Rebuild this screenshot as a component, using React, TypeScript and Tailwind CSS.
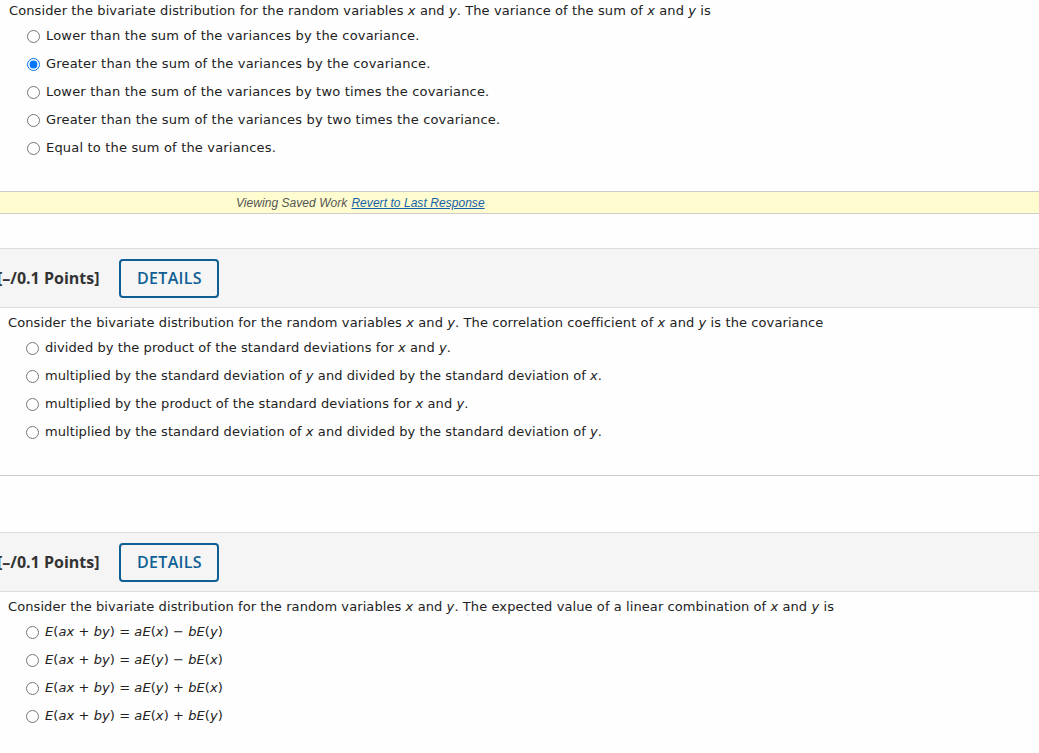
import React from "react";

const v = "font-['DejaVu_Sans',Verdana,sans-serif]";

function I({ children }: { children: React.ReactNode }) {
    return <span className="italic">{children}</span>;
}

function Option({ children, checked = false, name }: { children: React.ReactNode; checked?: boolean; name: string }) {
    return (
        <label className="flex h-[28px] items-center">
            <input type="radio" name={name} defaultChecked={checked} className="m-0 h-[13px] w-[13px]" />
            <span className="ml-[6px]">{children}</span>
        </label>
    );
}

function PointsHeader({ top }: { top: string }) {
    return (
        <div className={`${top} flex h-[60px] items-center border-y border-[#dddddd] bg-[#f5f5f5]`}>
            <span className="ml-[-3px] font-['Open_Sans',sans-serif] text-[16px] font-bold text-[#333333]">[–/0.1 Points]</span>
            <button className="ml-[20px] flex h-[39px] w-[100px] items-center justify-center rounded-[4px] border-2 border-[#0f5f94] font-['Open_Sans',sans-serif] text-[16px] font-semibold tracking-[0.3px] text-[#0f5f94]">
                DETAILS
            </button>
        </div>
    );
}

export default function App() {
    return (
        <div className={`min-h-screen bg-[#fefefe] text-[13px] text-[#222222] ${v}`}>
            <div className="pl-[9px]">
                <p className="pt-px leading-[20px] tracking-[0.11px]">
                    Consider the bivariate distribution for the random variables <I>x</I> and <I>y</I>. The variance of the sum of <I>x</I> and <I>y</I> is
                </p>
                <div className="mt-px pl-[18px] tracking-[0.18px]">
                    <Option name="q1">Lower than the sum of the variances by the covariance.</Option>
                    <Option name="q1" checked>Greater than the sum of the variances by the covariance.</Option>
                    <Option name="q1">Lower than the sum of the variances by two times the covariance.</Option>
                    <Option name="q1">Greater than the sum of the variances by two times the covariance.</Option>
                    <Option name="q1">Equal to the sum of the variances.</Option>
                </div>
            </div>

            <div className="mt-[29px] flex h-[23px] items-center border-y border-[#cccccc] bg-[#fffdcf] pl-[236px] font-['Liberation_Sans',Arial,sans-serif] text-[12px] italic tracking-[0.05px]">
                <span className="text-[#555555]">Viewing Saved Work</span>
                <a href="#" className="ml-[4px] text-[#1560a8] underline">Revert to Last Response</a>
            </div>

            <PointsHeader top="mt-[34px]" />

            <div className="pl-[8px]">
                <p className="mt-[5px] leading-[20px] tracking-[0.1px]">
                    Consider the bivariate distribution for the random variables <I>x</I> and <I>y</I>. The correlation coefficient of <I>x</I> and <I>y</I> is the covariance
                </p>
                <div className="mt-px pl-[18px] tracking-[0.08px]">
                    <Option name="q2">divided by the product of the standard deviations for <I>x</I> and <I>y</I>.</Option>
                    <Option name="q2">multiplied by the standard deviation of <I>y</I> and divided by the standard deviation of <I>x</I>.</Option>
                    <Option name="q2">multiplied by the product of the standard deviations for <I>x</I> and <I>y</I>.</Option>
                    <Option name="q2">multiplied by the standard deviation of <I>x</I> and divided by the standard deviation of <I>y</I>.</Option>
                </div>
            </div>

            <div className="mt-[29px] border-t border-[#cccccc]" />

            <PointsHeader top="mt-[56px]" />

            <div className="pl-[8px]">
                <p className="mt-[5px] leading-[20px] tracking-[0.09px]">
                    Consider the bivariate distribution for the random variables <I>x</I> and <I>y</I>. The expected value of a linear combination of <I>x</I> and <I>y</I> is
                </p>
                <div className="mt-px pl-[18px] tracking-[0.08px]">
                    <Option name="q3"><I>E</I>(<I>ax</I> + <I>by</I>) = <I>aE</I>(<I>x</I>) − <I>bE</I>(<I>y</I>)</Option>
                    <Option name="q3"><I>E</I>(<I>ax</I> + <I>by</I>) = <I>aE</I>(<I>y</I>) − <I>bE</I>(<I>x</I>)</Option>
                    <Option name="q3"><I>E</I>(<I>ax</I> + <I>by</I>) = <I>aE</I>(<I>y</I>) + <I>bE</I>(<I>x</I>)</Option>
                    <Option name="q3"><I>E</I>(<I>ax</I> + <I>by</I>) = <I>aE</I>(<I>x</I>) + <I>bE</I>(<I>y</I>)</Option>
                </div>
            </div>
        </div>
    );
}
